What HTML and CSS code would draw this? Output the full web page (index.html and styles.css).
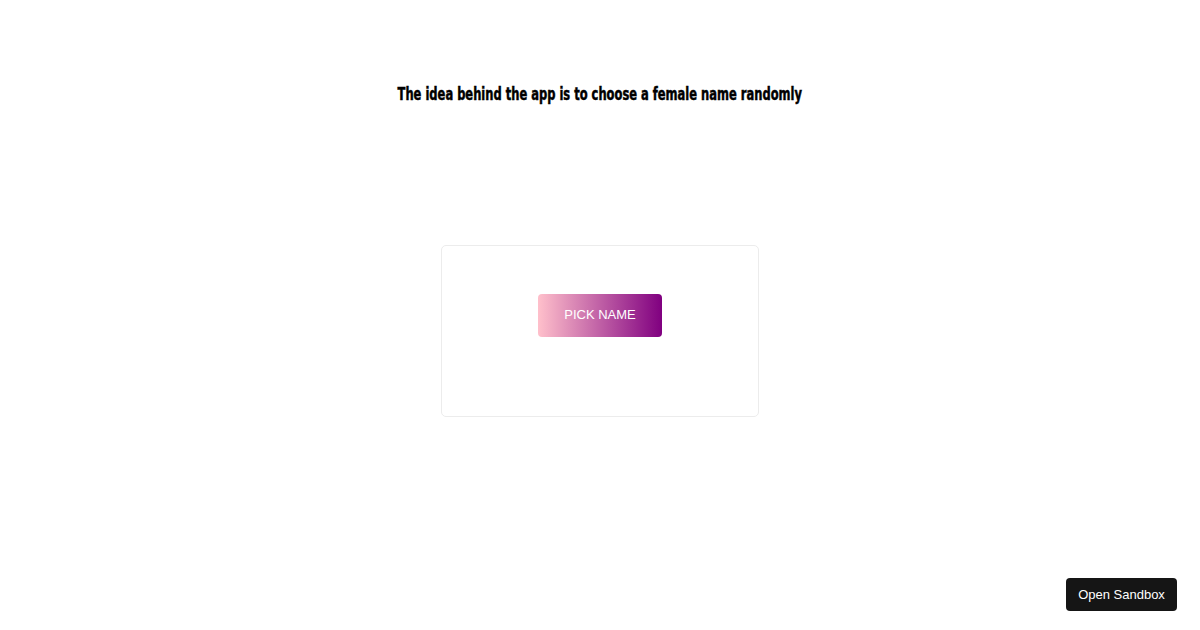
FILE: index.html
```html
<!DOCTYPE html>
<html>
<head>
<meta charset="utf-8">
<link rel="stylesheet" href="styles.css">
</head>
<body>
<div class="app">
  <h1 class="title">The idea behind the app is to choose a female name randomly</h1>
  <div class="card">
    <button class="pick">PICK NAME</button>
  </div>
</div>
<a class="sandbox">Open Sandbox</a>
</body>
</html>
```
FILE: styles.css
```css
html, body {
  margin: 0;
  padding: 0;
  background: #fff;
}
.app {
  display: flex;
  flex-direction: column;
  align-items: center;
  padding-top: 82px;
}
.title {
  margin: 0;
  font-family: "DejaVu Sans Condensed", "DejaVu Sans", sans-serif;
  font-weight: 700;
  font-size: 18px;
  line-height: 24px;
  color: #000;
  white-space: nowrap;
  transform: scaleX(0.71);
  -webkit-text-stroke: 0.5px #000;
}
.card {
  margin-top: 139px;
  width: 316px;
  height: 122px;
  border: 1px solid #ececec;
  border-radius: 5px;
  display: flex;
  justify-content: center;
  align-items: flex-start;
  padding-top: 48px;
  box-sizing: content-box;
}
.pick {
  width: 124px;
  height: 43px;
  border: none;
  border-radius: 4px;
  background: linear-gradient(to right, pink, purple);
  color: #fff;
  font-family: "Liberation Sans", Arial, sans-serif;
  font-size: 13px;
  padding: 0 0 3px 0;
}
.sandbox {
  position: fixed;
  right: 23px;
  bottom: 19px;
  width: 111px;
  height: 33px;
  box-sizing: border-box;
  display: flex;
  align-items: center;
  justify-content: center;
  background: #151515;
  color: #fff;
  border-radius: 4px;
  font-family: "Liberation Sans", Arial, sans-serif;
  font-size: 13px;
}
```
